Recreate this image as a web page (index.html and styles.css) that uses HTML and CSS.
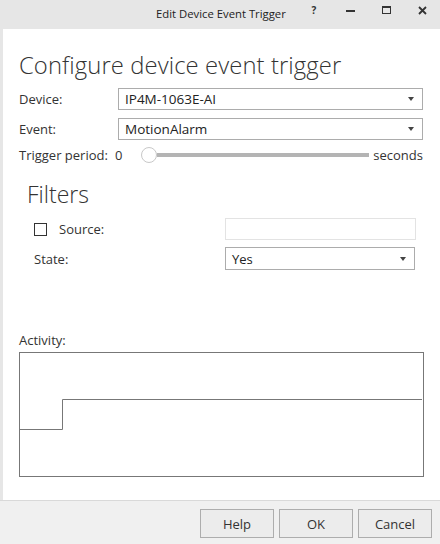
FILE: index.html
```html
<!DOCTYPE html>
<html>
<head>
<meta charset="utf-8">
<link rel="stylesheet" href="styles.css">
</head>
<body>
<div class="window">
  <div class="titlebar">
    <span class="title">Edit Device Event Trigger</span>
    <div class="controls">
      <span class="ctl help">?</span>
      <span class="ctl"><svg width="9" height="9" viewBox="0 0 9 9"><rect x="0" y="4" width="9" height="2" fill="#333"/></svg></span>
      <span class="ctl"><svg width="9" height="9" viewBox="0 0 9 9"><rect x="0.5" y="0.5" width="8" height="7" fill="none" stroke="#333"/><rect x="0" y="0" width="9" height="2" fill="#333"/></svg></span>
      <span class="ctl"><svg width="9" height="9" viewBox="0 0 9 9"><path d="M1 1 L8 8 M8 1 L1 8" stroke="#333" stroke-width="1.8"/></svg></span>
    </div>
  </div>
  <div class="body">
    <h1 class="heading">Configure device event trigger</h1>
    <div class="form">
      <label class="lbl">Device:</label>
      <div class="combo"><span>IP4M-1063E-AI</span><span class="arrow"></span></div>
      <label class="lbl">Event:</label>
      <div class="combo"><span>MotionAlarm</span><span class="arrow"></span></div>
    </div>
    <div class="trigger">
      <span class="lbl">Trigger period:</span>
      <span class="lbl zero">0</span>
      <div class="slider"><span class="thumb"></span><span class="track"></span></div>
      <span class="lbl secs">seconds</span>
    </div>
    <h2 class="filters">Filters</h2>
    <div class="filter-grid">
      <div class="check-row"><span class="checkbox"></span><span class="lbl">Source:</span></div>
      <div class="textbox"></div>
      <span class="lbl state">State:</span>
      <div class="combo small"><span>Yes</span><span class="arrow"></span></div>
    </div>
    <div class="activity">
      <span class="lbl">Activity:</span>
      <div class="chart">
        <svg width="402" height="123" viewBox="0 0 402 123">
          <path d="M0 76.5 H42.5 V46.5 H402" fill="none" stroke="#777" stroke-width="1"/>
        </svg>
      </div>
    </div>
  </div>
  <div class="footer">
    <button class="btn">Help</button>
    <button class="btn">OK</button>
    <button class="btn">Cancel</button>
  </div>
</div>
</body>
</html>
```
FILE: styles.css
```css
* { box-sizing: border-box; }
html, body { margin: 0; padding: 0; }
body {
  font-family: "Open Sans", "Noto Sans", sans-serif;
  color: #333;
  background: #fff;
}
.window {
  width: 440px;
  height: 544px;
  display: flex;
  flex-direction: column;
}
.titlebar {
  height: 29px;
  background: #e6e6e6;
  display: flex;
  align-items: flex-start;
  position: relative;
}
.title {
  position: absolute;
  left: 156px;
  top: 6px;
  font-size: 11.3px;
  color: #222;
}
.controls {
  margin-left: auto;
  margin-right: 0;
  display: flex;
  align-items: flex-start;
  padding-top: 6px;
}
.ctl {
  width: 36px;
  height: 9px;
  display: flex;
  justify-content: center;
  font-size: 10px;
  line-height: 9px;
  font-weight: bold;
  color: #333;
}
.body {
  flex: 1;
  border-left: 3px solid #e6e6e6;
  padding: 0 0 0 16px;
  display: flex;
  flex-direction: column;
}
.heading {
  margin: 20px 0 0 0;
  font-size: 23.8px;
  font-weight: 300;
  line-height: 32px;
  color: #333;
  letter-spacing: 0.1px;
}
.form {
  margin-top: 7px;
  display: grid;
  grid-template-columns: 99px 305px;
  row-gap: 8px;
  align-items: center;
}
.lbl {
  font-size: 13px;
  color: #333;
}
.combo {
  height: 22px;
  border: 1px solid #acacac;
  display: flex;
  align-items: center;
  padding: 0 6px 0 6px;
  font-size: 13.5px;
  color: #222;
}
.combo span:first-child { flex: 1; }
.arrow {
  width: 0; height: 0;
  border-left: 3.5px solid transparent;
  border-right: 3.5px solid transparent;
  border-top: 4px solid #444;
  margin-right: 2px;
}
.trigger {
  margin-top: 4px;
  width: 404px;
  height: 22px;
  display: flex;
  align-items: center;
}
.zero { margin-left: 7px; }
.slider {
  flex: 1;
  margin-left: 19px;
  display: flex;
  align-items: center;
  height: 16px;
}
.thumb {
  width: 16px; height: 16px;
  border-radius: 50%;
  border: 1px solid #c8c8c8;
  background: #fff;
  position: relative;
  z-index: 1;
}
.track {
  flex: 1;
  height: 4px;
  background: #b4b4b4;
}
.secs { margin-left: 4px; }
.filters {
  margin: 13px 0 0 8px;
  font-size: 23px;
  font-weight: 300;
  line-height: 30px;
  color: #333;
}
.filter-grid {
  margin: 9px 0 0 15px;
  display: grid;
  grid-template-columns: 191px 191px;
  row-gap: 7px;
  align-items: center;
}
.check-row { display: flex; align-items: center; }
.checkbox {
  width: 13px; height: 13px;
  border: 1px solid #333;
  margin-right: 12px;
}
.textbox {
  height: 22px;
  border: 1px solid #e3e3e3;
}
.combo.small { width: 190px; height: 23px; font-size: 13px; }
.activity {
  margin-top: 61px;
  display: flex;
  flex-direction: column;
}
.chart {
  margin-top: 3px;
  width: 405px;
  height: 125px;
  border: 1px solid #777;
}
.chart svg { display: block; }
.footer {
  height: 44px;
  background: #f0f0f0;
  border-top: 1px solid #d9d9d9;
  display: flex;
  justify-content: flex-end;
  align-items: flex-start;
  padding: 8px 8px 0 0;
  gap: 5px;
}
.btn {
  width: 74px;
  height: 29px;
  border: 1px solid #adadad;
  background: #ececec;
  font-family: "Open Sans", "Noto Sans", sans-serif;
  font-size: 13px;
  color: #333;
  padding: 0;
}
```
